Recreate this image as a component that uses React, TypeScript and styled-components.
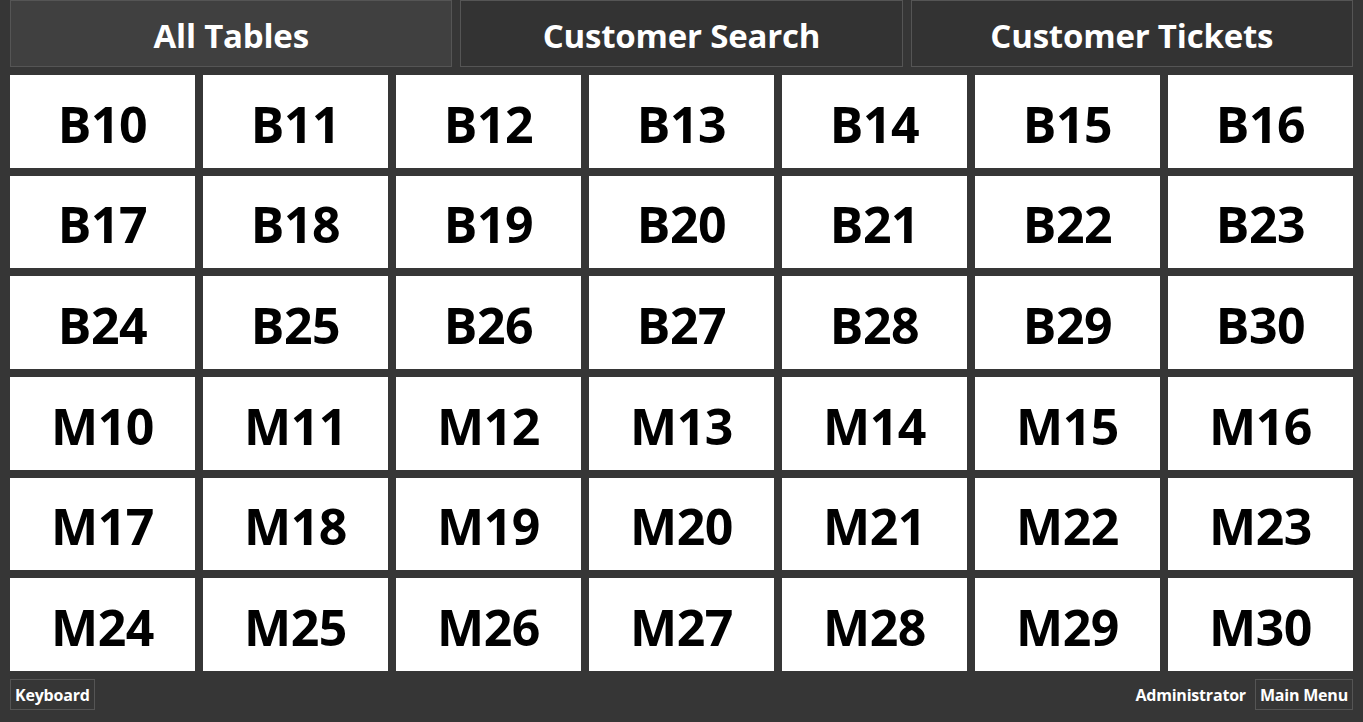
import styled, { createGlobalStyle } from 'styled-components';

const GlobalStyle = createGlobalStyle`
    html, body {
        margin: 0;
        padding: 0;
        background: #363636;
        font-family: 'Open Sans', 'Noto Sans', sans-serif;
    }
`

const tabs = ['All Tables', 'Customer Search', 'Customer Tickets'];

const tables = [
    ...Array.from({ length: 21 }, (_, i) => `B${10 + i}`),
    ...Array.from({ length: 21 }, (_, i) => `M${10 + i}`),
];

export default function App() {
    return (
        <>
            <GlobalStyle />
            <Screen>
                <TabBar>
                    {tabs.map((t, i) => (
                        <Tab key={t} $active={i === 0}>{t}</Tab>
                    ))}
                </TabBar>
                <TableGrid>
                    {tables.map((t) => (
                        <TableButton key={t}>{t}</TableButton>
                    ))}
                </TableGrid>
                <Footer>
                    <SmallButton>Keyboard</SmallButton>
                    <Spacer />
                    <UserName>Administrator</UserName>
                    <SmallButton>Main Menu</SmallButton>
                </Footer>
            </Screen>
        </>
    );
}

const Screen = styled.div`
    height: 722px;
    padding: 0 10px 12px 10px;
    box-sizing: border-box;
    display: flex;
    flex-direction: column;
    gap: 8px;
`

const TabBar = styled.div`
    display: grid;
    grid-template-columns: repeat(3, 1fr);
    gap: 8px;
    height: 67px;
`

const Tab = styled.div<{ $active?: boolean }>`
    display: flex;
    align-items: center;
    justify-content: center;
    padding-top: 3px;
    background: ${(p) => (p.$active ? '#404040' : '#333333')};
    border: 1px solid #555555;
    color: #ffffff;
    font-size: 33px;
    font-weight: 700;
    letter-spacing: -0.2px;
`

const TableGrid = styled.div`
    flex: 1;
    display: grid;
    grid-template-columns: repeat(7, 1fr);
    grid-template-rows: repeat(6, 1fr);
    gap: 8px;
`

const TableButton = styled.div`
    display: flex;
    align-items: center;
    justify-content: center;
    padding-top: 5px;
    background: #ffffff;
    color: #000000;
    font-size: 50px;
    font-weight: 700;
    letter-spacing: -0.5px;
`

const Footer = styled.div`
    display: flex;
    align-items: center;
    gap: 9px;
    height: 31px;
`

const Spacer = styled.div`
    flex: 1;
`

const SmallButton = styled.div`
    height: 31px;
    box-sizing: border-box;
    padding: 0 4px;
    display: flex;
    align-items: center;
    border: 1px solid #555555;
    color: #ffffff;
    font-size: 16px;
    font-weight: 700;
    letter-spacing: -0.2px;
`

const UserName = styled.span`
    color: #ffffff;
    font-size: 16px;
    font-weight: 700;
    letter-spacing: -0.2px;
`
